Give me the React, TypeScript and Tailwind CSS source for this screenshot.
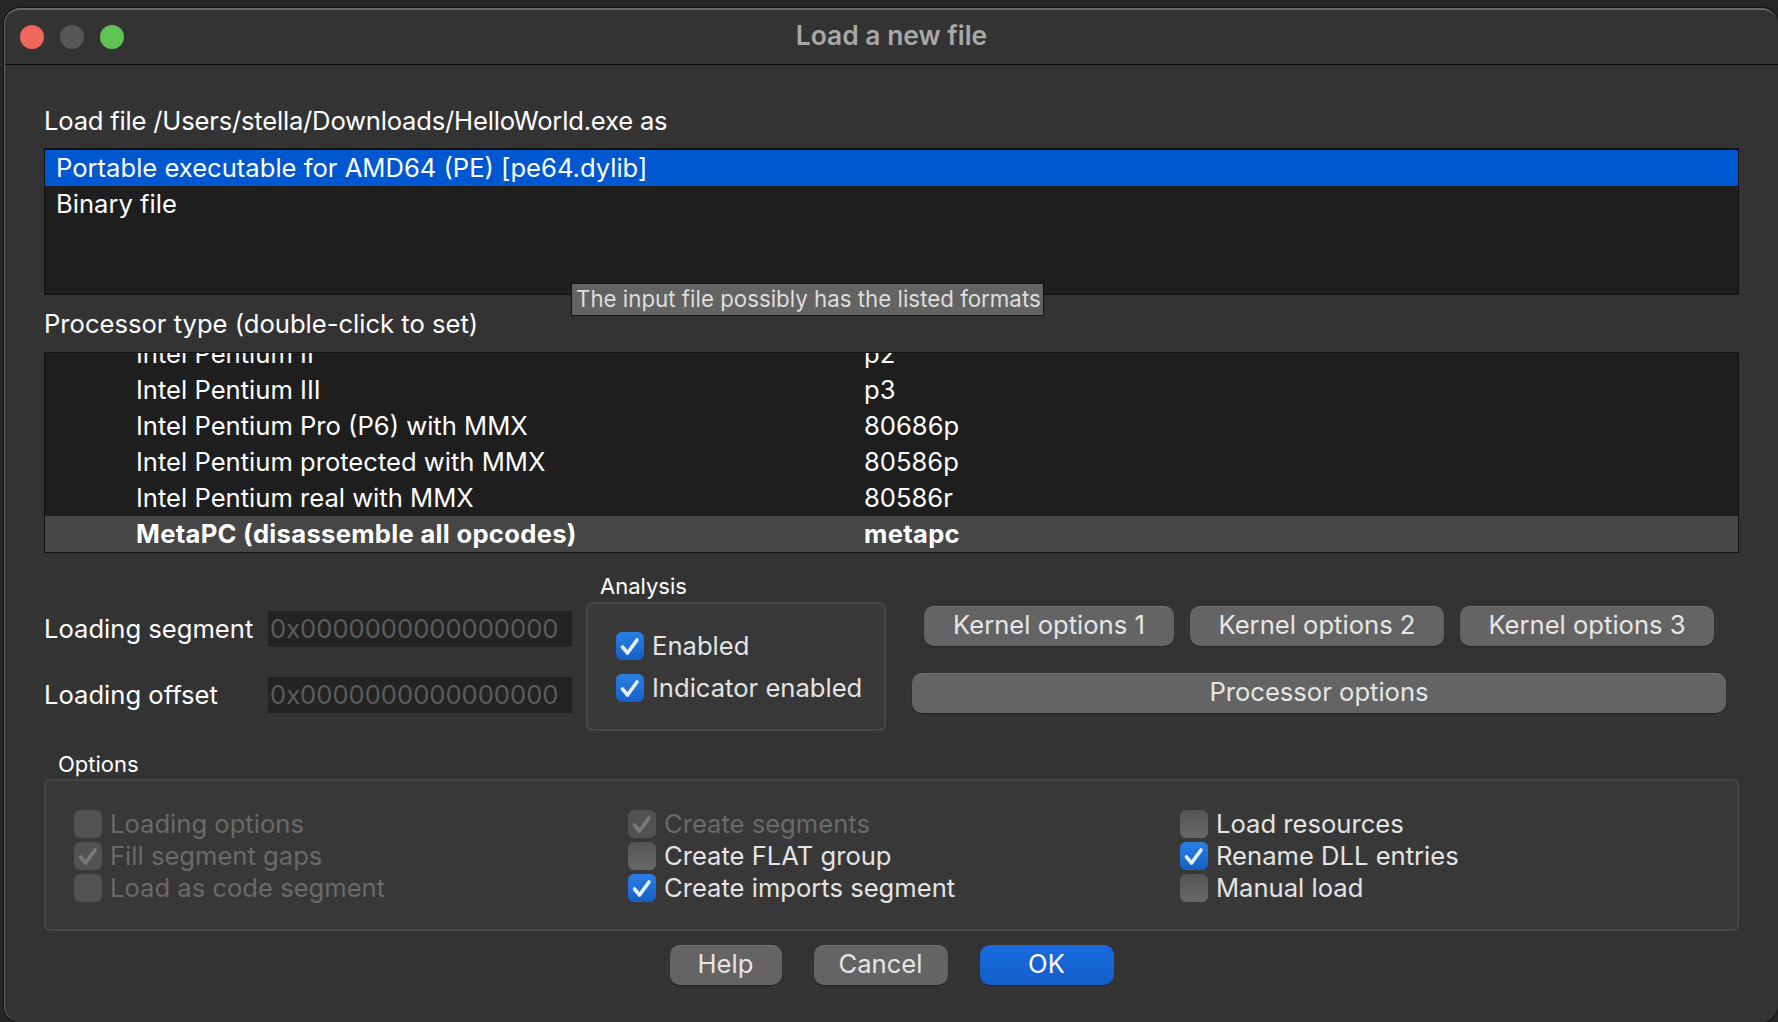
const rows = [
  ["Intel Pentium II", "p2"],
  ["Intel Pentium III", "p3"],
  ["Intel Pentium Pro (P6) with MMX", "80686p"],
  ["Intel Pentium protected with MMX", "80586p"],
  ["Intel Pentium real with MMX", "80586r"],
]

type BoxState = "on" | "off" | "dimOff" | "dimOn"

function Check({ state, label }: { state: BoxState; label: string }) {
  const dim = state === "dimOff" || state === "dimOn"
  const boxClass =
    state === "on"
      ? "bg-gradient-to-b from-[#2b7fe6] to-[#1460c4]"
      : dim
        ? "bg-[#525252]"
        : "bg-gradient-to-b from-[#555555] to-[#686868]"
  return (
    <div className="flex items-center h-[28px]">
      <span className={`flex items-center justify-center w-[28px] h-[28px] rounded-[6px] shrink-0 ${boxClass}`}>
        {(state === "on" || state === "dimOn") && (
          <svg viewBox="0 0 28 28" className="w-[28px] h-[28px]">
            <path
              d="M6.5 15 L11.5 21 L21 8"
              fill="none"
              stroke={state === "on" ? "#e6f0fd" : "#7a7a7a"}
              strokeWidth="3.6"
              strokeLinecap="round"
              strokeLinejoin="round"
            />
          </svg>
        )}
      </span>
      <span className={`ml-[8px] whitespace-nowrap ${dim ? "text-[#6a6a6a]" : "text-[#e4e4e4]"}`}>{label}</span>
    </div>
  )
}

function Btn({ label, w, primary }: { label: string; w: string; primary?: boolean }) {
  return (
    <button
      className={`${w} h-[40px] pb-[3px] rounded-[10px] flex items-center justify-center shrink-0 shadow-[0_1px_1px_rgba(0,0,0,0.3)] ${
        primary
          ? "bg-gradient-to-b from-[#196bdf] to-[#145ec8] text-white"
          : "bg-[#646464] border-t border-[#727272] text-[#e6e6e6]"
      }`}
    >
      {label}
    </button>
  )
}

function HexField({ label }: { label: string }) {
  return (
    <div className="flex items-center h-[36px]">
      <span className="w-[224px] text-white">{label}</span>
      <div className="w-[304px] h-[36px] bg-[#232323] flex items-center pl-[2px] text-[#5c5c5c]">0x0000000000000000</div>
    </div>
  )
}

export default function App() {
  return (
    <div className="w-[1778px] h-[1022px] overflow-hidden bg-[#262626] [font-family:Inter,sans-serif] text-[25.6px] leading-[36px]">
      <div className="h-[8px]" />
      <div className="relative ml-[4px] w-[1774px] h-[1014px] bg-[#333333] rounded-[16px] border-t-2 border-l border-[#666666] shadow-[0_0_0_1px_#111111] flex flex-col">
        <div className="h-[55px] shrink-0 border-b border-[#0c0c0c] flex items-center pl-[15px] relative">
          <span className="w-[24px] h-[24px] rounded-full bg-[#f0675e]" />
          <span className="w-[24px] h-[24px] rounded-full bg-[#565656] ml-[16px]" />
          <span className="w-[24px] h-[24px] rounded-full bg-[#5fc454] ml-[16px]" />
          <span className="flex-1 text-center pr-[119px] pb-[4px] text-[#a8a8a8] text-[26.4px] font-semibold">Load a new file</span>
        </div>

        <div className="flex flex-col pl-[39px] pr-[39px]">
          <div className="mt-[38px] h-[36px] text-white tracking-[-0.2px]">Load file /Users/stella/Downloads/HelloWorld.exe as</div>

          <div className="relative mt-[9px] h-[147px] bg-[#1e1e1e] border border-[#111111] border-t-2">
            <div className="h-[36px] bg-[#0058d0] text-white pl-[11px]">Portable executable for AMD64 (PE) [pe64.dylib]</div>
            <div className="h-[36px] text-white pl-[11px]">Binary file</div>
            <div className="absolute left-[526px] top-[133px] z-10 w-[473px] h-[33px] bg-[#636363] border border-[#111111] text-[#dddddd] text-[22.3px] leading-[29px] pl-[4px] whitespace-nowrap">
              The input file possibly has the listed formats
            </div>
          </div>

          <div className="mt-[11px] h-[36px] text-white">Processor type (double-click to set)</div>

          <div className="mt-[10px] h-[201px] bg-[#1e1e1e] border border-[#111111] overflow-hidden text-white">
            <div className="-mt-[17px]">
              {rows.map(([name, code]) => (
                <div key={code} className="flex h-[36px]">
                  <span className="ml-[91px] w-[728px]">{name}</span>
                  <span>{code}</span>
                </div>
              ))}
              <div className="flex h-[36px] bg-[#464646] font-bold tracking-[0.3px]">
                <span className="ml-[91px] w-[728px]">MetaPC (disassemble all opcodes)</span>
                <span>metapc</span>
              </div>
            </div>
          </div>

          <div className="mt-[22px] flex">
            <div className="pt-[36px] flex flex-col gap-[30px]">
              <HexField label="Loading segment" />
              <HexField label="Loading offset" />
            </div>
            <div className="ml-[14px] w-[300px] flex flex-col">
              <div className="h-[24px] leading-[22px] pl-[14px] text-[22px] text-white">Analysis</div>
              <div className="mt-[3px] h-[129px] bg-[#383838] border-2 border-[#474747] rounded-[7px] pl-[28px] pt-[28px] flex flex-col gap-[14px]">
                <Check state="on" label="Enabled" />
                <Check state="on" label="Indicator enabled" />
              </div>
            </div>
            <div className="flex flex-col pt-[31px]">
              <div className="flex pl-[38px] gap-[16px]">
                <Btn label="Kernel options 1" w="w-[250px]" />
                <Btn label="Kernel options 2" w="w-[254px]" />
                <Btn label="Kernel options 3" w="w-[254px]" />
              </div>
              <div className="pl-[26px] mt-[27px]">
                <Btn label="Processor options" w="w-[814px]" />
              </div>
            </div>
          </div>

          <div className="mt-[21px] h-[24px] leading-[24px] pl-[14px] text-[22px] text-white">Options</div>
          <div className="mt-[3px] h-[152px] bg-[#383838] border-2 border-[#474747] rounded-[6px] pt-[29px] pl-[28px] grid grid-cols-[554px_552px_1fr]">
            <div className="flex flex-col gap-[4px]">
              <Check state="dimOff" label="Loading options" />
              <Check state="dimOn" label="Fill segment gaps" />
              <Check state="dimOff" label="Load as code segment" />
            </div>
            <div className="flex flex-col gap-[4px]">
              <Check state="dimOn" label="Create segments" />
              <Check state="off" label="Create FLAT group" />
              <Check state="on" label="Create imports segment" />
            </div>
            <div className="flex flex-col gap-[4px]">
              <Check state="off" label="Load resources" />
              <Check state="on" label="Rename DLL entries" />
              <Check state="off" label="Manual load" />
            </div>
          </div>

          <div className="mt-[14px] flex justify-center gap-[32px]">
            <Btn label="Help" w="w-[112px]" />
            <Btn label="Cancel" w="w-[134px]" />
            <Btn label="OK" w="w-[134px]" primary />
          </div>
        </div>
      </div>
    </div>
  )
}
